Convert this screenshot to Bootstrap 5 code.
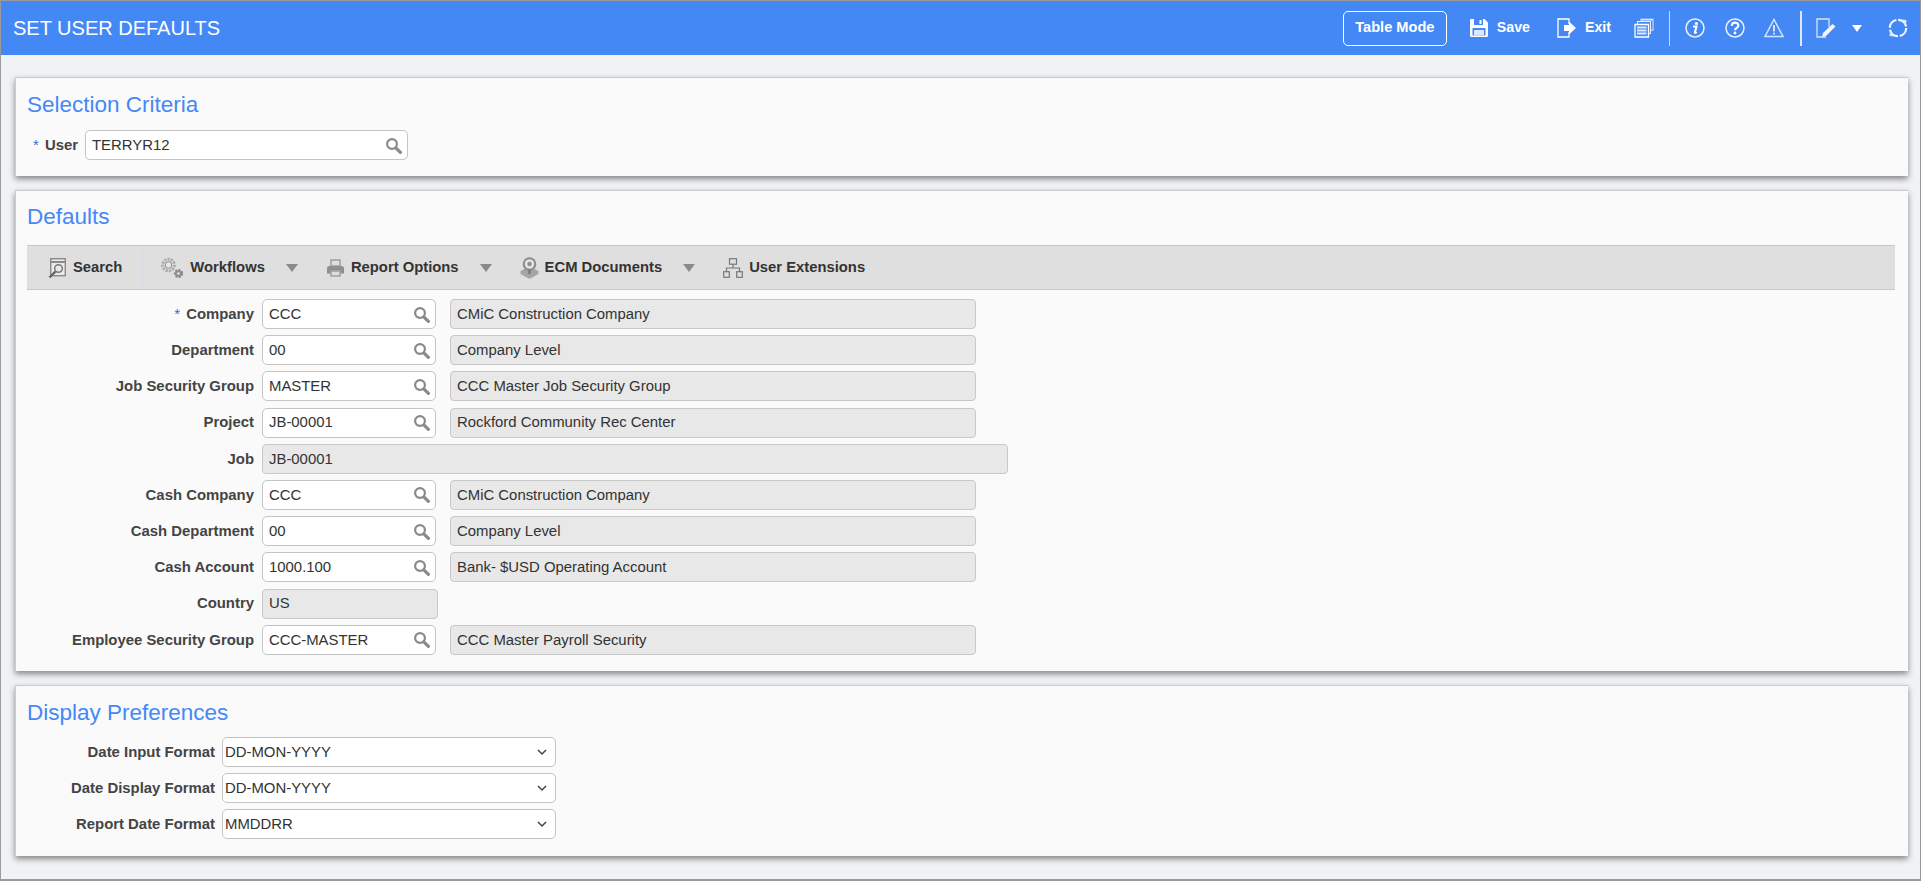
<!DOCTYPE html>
<html lang="en">
<head>
<meta charset="utf-8">
<title>Set User Defaults</title>
<link href="https://cdn.jsdelivr.net/npm/bootstrap@5.3.0/dist/css/bootstrap.min.css" rel="stylesheet">
<style>
html,body{height:100%;}
body{font-family:"Liberation Sans",Arial,sans-serif;font-size:14.9px;color:#333;background:#f1f2f4;overflow:hidden;}
.shell{height:881px;border:1px solid #9a9a9a;border-bottom-width:2px;display:flex;flex-direction:column;}
.topbar{height:54px;background:#4488f6;color:#fff;padding-left:12px;padding-right:12px;flex:none;}
.topbar-title{font-size:20px;line-height:1;margin:0;font-weight:400;}
.mode-btn{height:35px;width:104px;border:1px solid #fff;border-radius:5px;background:transparent;color:#fff;font-weight:700;font-size:14.6px;padding:0;}
.mode-btn:hover{color:#fff;}
.bar-act{color:#fff;font-weight:700;font-size:14.2px;gap:8px;}
.sep-thin{width:1px;height:35px;background:#c6d9fb;margin-left:15px;}
.sep-thick{width:2px;height:35px;background:#dfe9fc;margin-left:16px;}
.m-save{margin-left:22px;}
.m-exit{margin-left:27px;}
.m-copy{margin-left:23px;}
.m-info{margin-left:15px;}
.m-help{margin-left:20px;}
.m-warn{margin-left:19px;}
.m-edit{margin-left:14px;}
.m-refresh{margin-left:26px;}
.bar-caret{width:0;height:0;border-left:5.5px solid transparent;border-right:5.5px solid transparent;border-top:7px solid #fff;margin-left:16px;}
.main{padding:22px 12px 0 14px;flex:1;}
.panel{background:#fafafa;border-top:1px solid #ccc;border-left:1px solid #ccc;box-shadow:0 3px 6px rgba(0,0,0,.45);margin-bottom:14px;padding-left:11px;}
.panel-a{height:99px;}
.panel-b{height:481px;}
.panel-c{height:171px;}
.panel-head{color:#4488f6;font-size:22.5px;line-height:26px;font-weight:400;margin:0;padding-top:14px;}
.panel-b .panel-head{padding-top:13px;}
.field-row{height:30px;margin-bottom:6.2px;}
.lbl{font-weight:700;color:#444;text-align:right;flex:none;white-space:nowrap;}
.req{color:#2a6fdb;font-weight:400;margin-right:2px;}
.w-user{width:51px;margin-right:7px;}
.w-def{width:227px;margin-right:8px;}
.w-sel{width:188px;margin-right:7px;}
.lookup{display:flex;align-items:center;justify-content:space-between;background:#fff;border:1px solid #c4c4c4;border-radius:5px;height:30px;padding:0 5px 0 6px;color:#333;flex:none;}
.lookup-user{width:323px;}
.lookup-def{width:174px;margin-right:14px;}
.ro{background:#e8e8e8;border:1px solid #c8c8c8;border-radius:4px;height:30px;padding:0 6px;display:flex;align-items:center;color:#333;flex:none;}
.ro-desc{width:526px;}
.ro-job{width:746px;}
.ro-country{width:176px;}
.sel-box{width:334px;height:30px;border:1px solid #c4c4c4;border-radius:5px;background:#fff;padding:0 8px 0 2px;color:#333;flex:none;}
.toolstrip{height:45px;background:#dfdfdf;border-top:1px solid #c8c8c8;border-bottom:1px solid #c8c8c8;margin-top:15px;margin-bottom:9px;margin-right:13px;padding-left:21px;font-weight:700;color:#333;font-size:14.8px;}
.tool-sep{width:1px;height:38px;background:#d4dbe2;margin:0 18px 0 20px;}
.tool{gap:6px;}
.tool-caret{width:0;height:0;border-left:6px solid transparent;border-right:6px solid transparent;border-top:8px solid #8a8a8a;margin:0 28px 0 21px;}
.panel-a .field-row{margin-top:12px;}
.panel-c .panel-head + .field-row{margin-top:11px;}
.mag{flex:none;}
</style>
</head>
<body>
<svg width="0" height="0" class="d-block position-absolute">
  <symbol id="mag" viewBox="0 0 17 17"><circle cx="7" cy="7" r="4.9" fill="none" stroke="#8a8a8a" stroke-width="2.2"/><path d="M10.8 10.8l4.6 4.6" stroke="#8a8a8a" stroke-width="3.2" stroke-linecap="round"/></symbol>
  <symbol id="chev" viewBox="0 0 10 7"><path d="M1 1l4 4 4-4" fill="none" stroke="#444" stroke-width="1.5"/></symbol>
</svg>
<div class="shell">
  <header class="topbar d-flex align-items-center">
    <h1 class="topbar-title flex-grow-1">SET USER DEFAULTS</h1>
    <button type="button" class="btn mode-btn">Table Mode</button>
    <span class="bar-act m-save d-flex align-items-center">
      <svg width="20" height="20" viewBox="0 0 20 20"><path d="M2 1h13.500L19 4.500V17.500a1.500 1.500 0 0 1-1.500 1.500h-15A1.500 1.500 0 0 1 1 17.500V2a1 1 0 0 1 1-1z" fill="#fff"/><rect x="5" y="1" width="9" height="6" fill="#4488f6"/><rect x="10.500" y="2" width="2" height="4" fill="#fff"/><rect x="3.500" y="10" width="13" height="7.500" fill="#4488f6"/><rect x="5" y="12" width="10" height="5.500" fill="#dbe8fd"/></svg>Save</span>
    <span class="bar-act m-exit d-flex align-items-center">
      <svg width="20" height="20" viewBox="0 0 20 20"><path d="M12 6V1H1v18h11v-5" fill="none" stroke="#fff" stroke-width="1.300"/><path d="M7 7h5V3.500l7 6.500-7 6.500V13H7z" fill="#fff"/></svg>Exit</span>
    <svg class="m-copy" width="20" height="20" viewBox="0 0 20 20"><rect x="6.500" y="0.700" width="13" height="12" fill="#dbe8fd"/><rect x="7.500" y="2.500" width="11" height="9" fill="#4488f6"/><rect x="3.500" y="3.500" width="13" height="12" fill="#4488f6" stroke="#eaf1fe"/><path d="M1 6.500h13.500V19H1z" fill="#4488f6" stroke="#fff" stroke-width="1.300"/><path d="M3 9.500h9.500M3 12.500h9.500M3 15.500h9.500" stroke="#dbe8fd" stroke-width="1.800"/></svg>
    <span class="sep-thin"></span>
    <svg class="m-info" width="20" height="20" viewBox="0 0 20 20"><circle cx="10" cy="10" r="9" fill="none" stroke="#eaf1fe" stroke-width="1.500"/><circle cx="11.400" cy="5.400" r="1.500" fill="#fff"/><path d="M8 8.400h3.600L9.900 14.200c-.2.9.7 1 1.900.1" fill="none" stroke="#fff" stroke-width="2"/></svg>
    <svg class="m-help" width="20" height="20" viewBox="0 0 20 20"><circle cx="10" cy="10" r="9" fill="none" stroke="#eaf1fe" stroke-width="1.500"/><path d="M6.800 7.800c0-4.200 6.600-4.200 6.600-.2 0 2.400-3.400 2.200-3.400 4.600" fill="none" stroke="#fff" stroke-width="2.100"/><circle cx="10" cy="15" r="1.400" fill="#fff"/></svg>
    <svg class="m-warn" width="20" height="20" viewBox="0 0 20 20"><path d="M10 1.500L19 18.500H1z" fill="none" stroke="#d5e3fc" stroke-width="1.500"/><path d="M10 7v6.500" stroke="#d5e3fc" stroke-width="2"/><circle cx="10" cy="15.600" r="1.100" fill="#d5e3fc"/></svg>
    <span class="sep-thick"></span>
    <svg class="m-edit" width="20" height="20" viewBox="0 0 20 20"><path d="M10 19H1V1h12v8" fill="none" stroke="#d5e3fc" stroke-width="1.300"/><path d="M6 19l1-4L16.500 6l3 2.500L10 18z" fill="#f0f5ff"/></svg>
    <span class="bar-caret"></span>
    <svg class="m-refresh" width="20" height="20" viewBox="0 0 20 20"><circle cx="10" cy="10" r="8.200" fill="none" stroke="#f4f8ff" stroke-width="2.200" stroke-dasharray="11 1.880"/><path d="M13.500 1.500l5 .5-.5 5zM6.500 18.500l-5-.5.5-5z" fill="#dbe8fd"/></svg>
  </header>

  <main class="main">
    <section class="panel panel-a">
      <h2 class="panel-head">Selection Criteria</h2>
      <div class="field-row d-flex align-items-center">
        <span class="lbl w-user"><span class="req">*</span> User</span>
        <span class="lookup lookup-user">TERRYR12<svg class="mag" width="17" height="17"><use href="#mag"/></svg></span>
      </div>
    </section>

    <section class="panel panel-b">
      <h2 class="panel-head">Defaults</h2>
      <div class="toolstrip d-flex align-items-center">
        <span class="tool d-flex align-items-center">
          <svg width="19" height="22" viewBox="0 0 19 22"><rect x="2.700" y="1.700" width="14.600" height="17" fill="#e9e9e9" stroke="#8a8a8a" stroke-width="1.400"/><path d="M2.700 5h14.600" stroke="#8a8a8a" stroke-width="2"/><circle cx="10.500" cy="11.500" r="3.800" fill="none" stroke="#7a7a7a" stroke-width="1.500"/><path d="M7.500 14.500L1.500 20.500" stroke="#666" stroke-width="2.400"/></svg>Search</span>
        <span class="tool-sep"></span>
        <span class="tool d-flex align-items-center">
          <svg width="23" height="22" viewBox="0 0 23 22"><circle cx="7.500" cy="8" r="5.800" fill="#e6e6e6" stroke="#aaa" stroke-width="3" stroke-dasharray="2.200 1"/><circle cx="7.500" cy="8" r="3.300" fill="#e6e6e6" stroke="#8a8a8a"/><circle cx="17.500" cy="16.500" r="3.300" fill="#9a9a9a" stroke="#8a8a8a" stroke-width="2.600" stroke-dasharray="2 1"/><circle cx="17.500" cy="16.500" r="1.300" fill="#ddd"/></svg>Workflows</span>
        <span class="tool-caret"></span>
        <span class="tool d-flex align-items-center">
          <svg width="19" height="18" viewBox="0 0 19 18"><rect x="5" y="1" width="9" height="6" fill="none" stroke="#9a9a9a" stroke-width="1.400"/><path d="M1 9.500a2.500 2.500 0 0 1 2.500-2.500h12a2.500 2.500 0 0 1 2.500 2.500v5h-3.500v-3h-10v3H1z" fill="#8f8f8f"/><rect x="5" y="12" width="9" height="5" fill="none" stroke="#9a9a9a" stroke-width="1.400"/></svg>Report Options</span>
        <span class="tool-caret"></span>
        <span class="tool d-flex align-items-center">
          <svg width="19" height="22" viewBox="0 0 19 22"><path d="M0.500 14l5-2.500h8l5 2.500v3l-8 4.500h-2l-8-4.500z" fill="#a5a5a5"/><circle cx="9.500" cy="7" r="5.800" fill="#e2e2e2" stroke="#8a8a8a" stroke-width="2"/><circle cx="9.500" cy="7" r="2.200" fill="#8f8f8f"/><path d="M8 12h3v5H8z" fill="#808080"/></svg>ECM Documents</span>
        <span class="tool-caret"></span>
        <span class="tool d-flex align-items-center">
          <svg width="20" height="20" viewBox="0 0 20 20"><rect x="6.500" y="0.700" width="7" height="5.500" fill="none" stroke="#777" stroke-width="1.200"/><rect x="0.700" y="13.700" width="5.600" height="5.600" fill="none" stroke="#777" stroke-width="1.200"/><rect x="13.700" y="13.700" width="5.600" height="5.600" fill="none" stroke="#777" stroke-width="1.200"/><path d="M10 6v4M3.500 13.700V10h13v3.700" fill="none" stroke="#777" stroke-width="1.200"/></svg>User Extensions</span>
      </div>

      <div class="field-row d-flex align-items-center"><span class="lbl w-def"><span class="req">*</span> Company</span><span class="lookup lookup-def">CCC<svg class="mag" width="17" height="17"><use href="#mag"/></svg></span><span class="ro ro-desc">CMiC Construction Company</span></div>
      <div class="field-row d-flex align-items-center"><span class="lbl w-def">Department</span><span class="lookup lookup-def">00<svg class="mag" width="17" height="17"><use href="#mag"/></svg></span><span class="ro ro-desc">Company Level</span></div>
      <div class="field-row d-flex align-items-center"><span class="lbl w-def">Job Security Group</span><span class="lookup lookup-def">MASTER<svg class="mag" width="17" height="17"><use href="#mag"/></svg></span><span class="ro ro-desc">CCC Master Job Security Group</span></div>
      <div class="field-row d-flex align-items-center"><span class="lbl w-def">Project</span><span class="lookup lookup-def">JB-00001<svg class="mag" width="17" height="17"><use href="#mag"/></svg></span><span class="ro ro-desc">Rockford Community Rec Center</span></div>
      <div class="field-row d-flex align-items-center"><span class="lbl w-def">Job</span><span class="ro ro-job">JB-00001</span></div>
      <div class="field-row d-flex align-items-center"><span class="lbl w-def">Cash Company</span><span class="lookup lookup-def">CCC<svg class="mag" width="17" height="17"><use href="#mag"/></svg></span><span class="ro ro-desc">CMiC Construction Company</span></div>
      <div class="field-row d-flex align-items-center"><span class="lbl w-def">Cash Department</span><span class="lookup lookup-def">00<svg class="mag" width="17" height="17"><use href="#mag"/></svg></span><span class="ro ro-desc">Company Level</span></div>
      <div class="field-row d-flex align-items-center"><span class="lbl w-def">Cash Account</span><span class="lookup lookup-def">1000.100<svg class="mag" width="17" height="17"><use href="#mag"/></svg></span><span class="ro ro-desc">Bank- $USD Operating Account</span></div>
      <div class="field-row d-flex align-items-center"><span class="lbl w-def">Country</span><span class="ro ro-country">US</span></div>
      <div class="field-row d-flex align-items-center"><span class="lbl w-def">Employee Security Group</span><span class="lookup lookup-def">CCC-MASTER<svg class="mag" width="17" height="17"><use href="#mag"/></svg></span><span class="ro ro-desc">CCC Master Payroll Security</span></div>
    </section>

    <section class="panel panel-c">
      <h2 class="panel-head">Display Preferences</h2>
      <div class="field-row d-flex align-items-center"><span class="lbl w-sel">Date Input Format</span><span class="sel-box d-flex align-items-center justify-content-between">DD-MON-YYYY<svg width="10" height="7"><use href="#chev"/></svg></span></div>
      <div class="field-row d-flex align-items-center"><span class="lbl w-sel">Date Display Format</span><span class="sel-box d-flex align-items-center justify-content-between">DD-MON-YYYY<svg width="10" height="7"><use href="#chev"/></svg></span></div>
      <div class="field-row d-flex align-items-center"><span class="lbl w-sel">Report Date Format</span><span class="sel-box d-flex align-items-center justify-content-between">MMDDRR<svg width="10" height="7"><use href="#chev"/></svg></span></div>
    </section>
  </main>
</div>
<script src="https://cdn.jsdelivr.net/npm/bootstrap@5.3.0/dist/js/bootstrap.bundle.min.js"></script>
</body>
</html>
